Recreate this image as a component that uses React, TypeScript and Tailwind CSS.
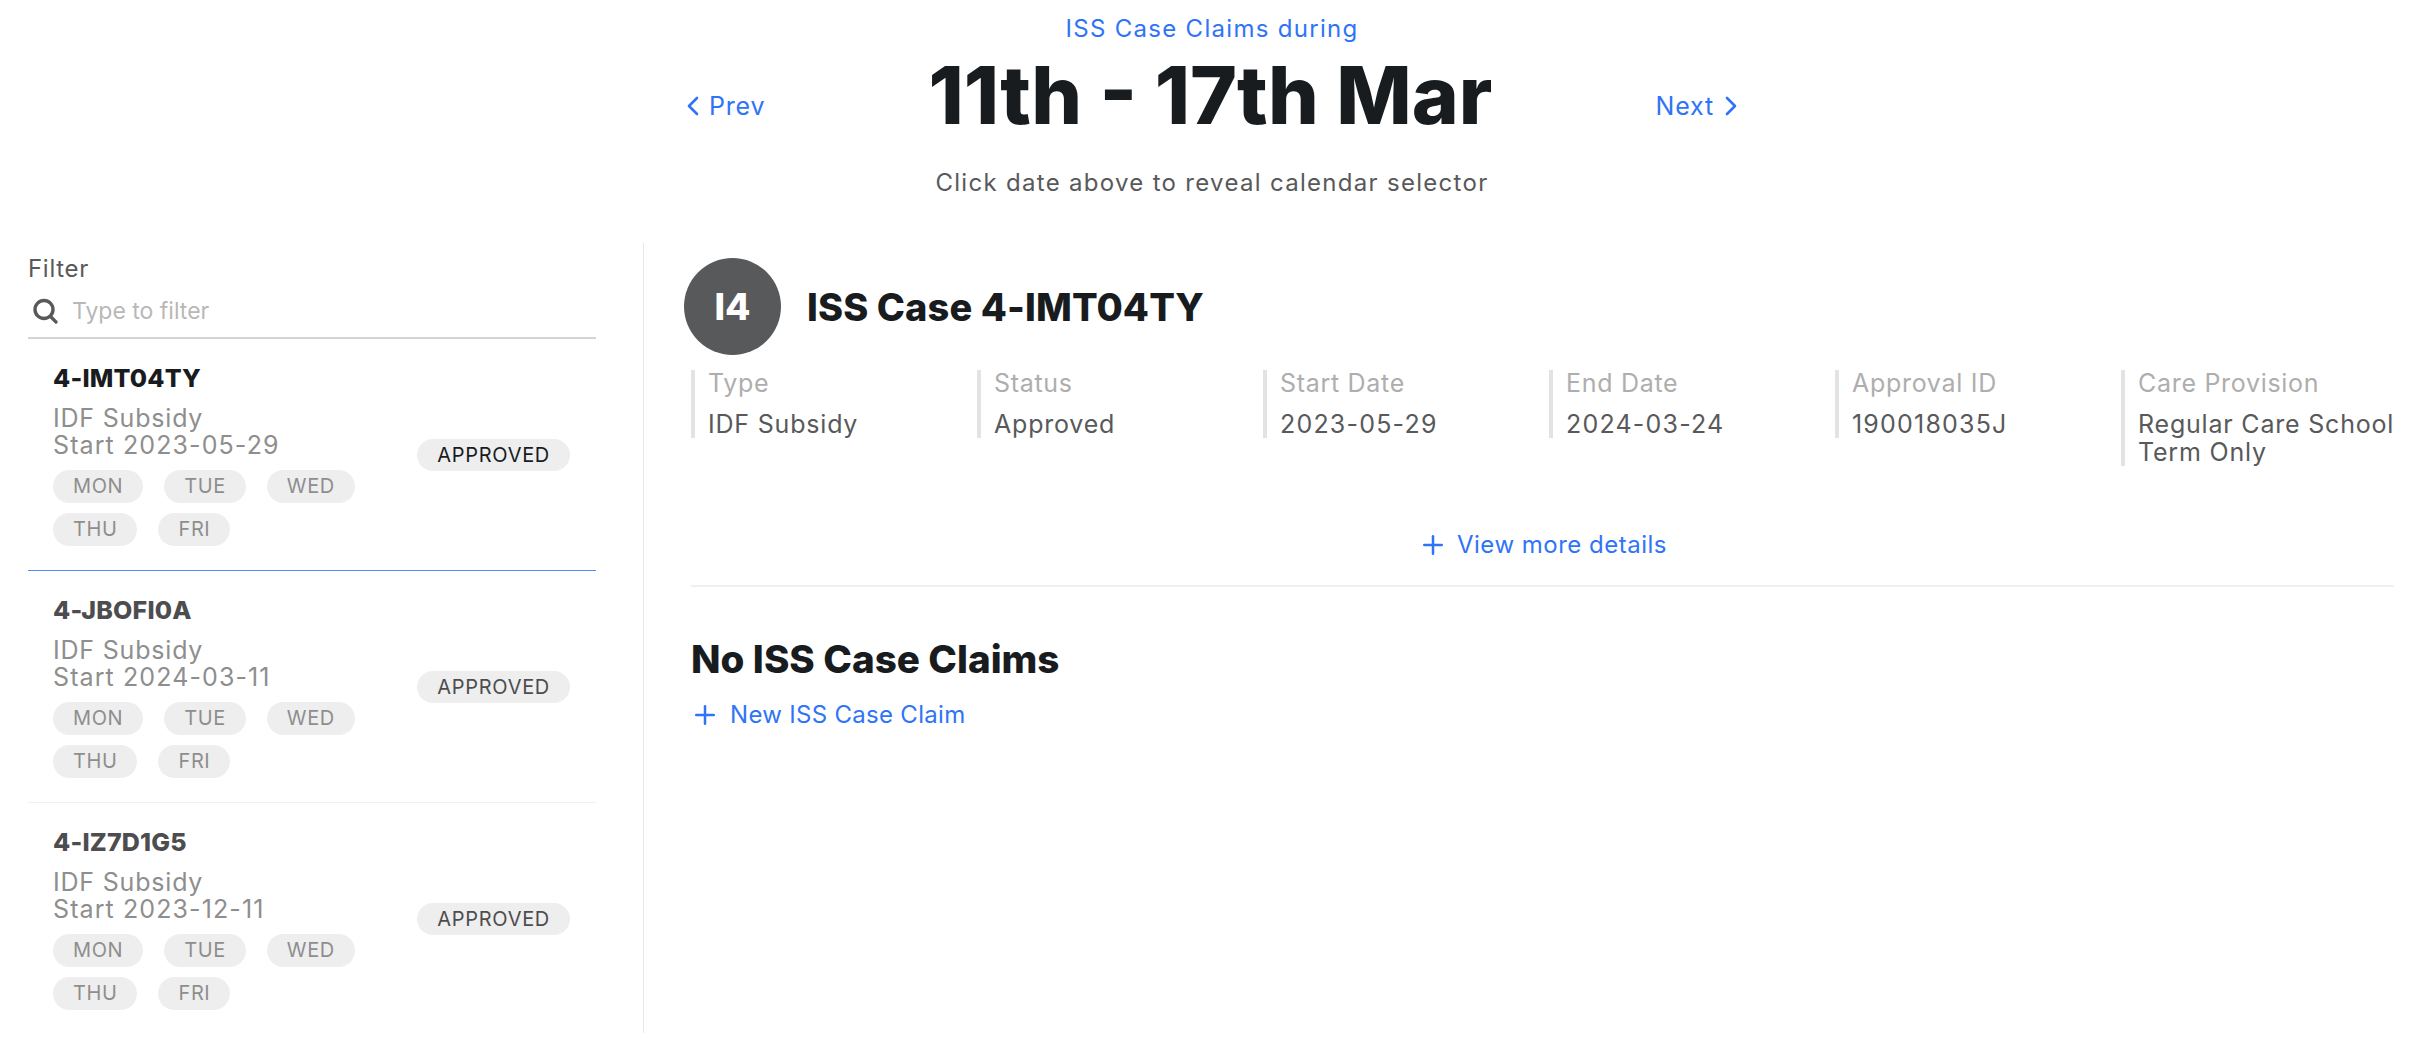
import { Plus } from "lucide-react";

const DAYS = ["MON", "TUE", "WED", "THU", "FRI"];

const CASES = [
  { id: "4-IMT04TY", start: "2023-05-29", active: true },
  { id: "4-JBOFI0A", start: "2024-03-11", active: false },
  { id: "4-IZ7D1G5", start: "2023-12-11", active: false },
];

const DETAILS = [
  { label: "Type", value: "IDF Subsidy", numeric: false },
  { label: "Status", value: "Approved", numeric: false },
  { label: "Start Date", value: "2023-05-29", numeric: true },
  { label: "End Date", value: "2024-03-24", numeric: true },
  { label: "Approval ID", value: "190018035J", numeric: true },
  { label: "Care Provision", value: "Regular Care School Term Only", numeric: false },
];

function CaseRow({ id, start, active, last }: { id: string; start: string; active: boolean; last: boolean }) {
  return (
    <div className={`flex items-center pl-[25px] pr-[26px] pt-[25px] pb-[25px] h-[232px] ${last ? "" : active ? "border-b border-[#4f8ff5]" : "border-b border-[#f0f0f0]"}`}>
      <div className="flex-1 min-w-0">
        <div className={`text-[25px] leading-[28px] font-extrabold tracking-[0.2px] ${active ? "text-[#191c1f]" : "text-[#4d4d4f]"}`}>{id}</div>
        <div className="mt-[13px] text-[25px] leading-[27px] tracking-[0.8px] text-[#8e8e8e]">
          <div>IDF Subsidy</div>
          <div className="tracking-[1.1px]">Start {start}</div>
        </div>
        <div className="mt-[11px] flex flex-wrap gap-x-[21px] gap-y-[10px]">
          {DAYS.map((d) => (
            <span key={d} className="h-[33px] px-[20px] rounded-full bg-[#eeeeee] text-[20px] leading-[33px] tracking-[0.6px] text-[#8e8e8e]">{d}</span>
          ))}
        </div>
      </div>
      <span className={`shrink-0 h-[32px] px-[20px] rounded-full bg-[#eeeeee] text-[20px] leading-[32px] tracking-[0.7px] ${active ? "text-[#191c1f]" : "text-[#4d4d4f]"}`}>APPROVED</span>
    </div>
  );
}

export default function App() {
  return (
    <div className="w-full h-[1038px] overflow-hidden bg-white font-[Inter,sans-serif]">
      {/* Week header */}
      <header className="h-[243px] pt-[14px] flex flex-col items-center">
        <a className="text-[24px] leading-[30px] tracking-[1.3px] text-[#2f74f6]">ISS Case Claims during</a>
        <div className="mt-[5px] w-[1052px] flex items-center justify-between">
          <a className="mt-[22px] flex items-center gap-[9px] text-[25px] leading-[30px] tracking-[0.8px] text-[#2f74f6]">
            <svg viewBox="0 0 14 20" className="w-[14px] h-[20px]" fill="none" stroke="currentColor" strokeWidth="2.6" strokeLinecap="round" strokeLinejoin="round">
              <path d="M11 2L3 10l8 8" />
            </svg>
            Prev
          </a>
          <h1 className="text-[80px] leading-[92px] font-extrabold text-[#191c1f]">11th - 17th Mar</h1>
          <a className="mt-[22px] flex items-center gap-[10px] text-[25px] leading-[30px] tracking-[0.8px] text-[#2f74f6]">
            Next
            <svg viewBox="0 0 14 20" className="w-[14px] h-[20px]" fill="none" stroke="currentColor" strokeWidth="2.6" strokeLinecap="round" strokeLinejoin="round">
              <path d="M3 2l8 8-8 8" />
            </svg>
          </a>
        </div>
        <p className="mt-[27px] text-[24px] leading-[30px] tracking-[1.3px] text-[#58595b]">Click date above to reveal calendar selector</p>
      </header>

      <div className="flex h-[790px]">
        {/* Case list */}
        <aside className="w-[644px] shrink-0 border-r border-[#e6e6e6] pl-[28px] pr-[47px] pt-[11px]">
          <div className="text-[24px] leading-[30px] tracking-[0.7px] text-[#58595b]">Filter</div>
          <label className="mt-[13px] h-[42px] pb-[12px] flex items-center gap-[14px] pl-[4px] border-b-2 border-[#d4d4d4]">
            <svg viewBox="0 0 26 26" className="w-[26px] h-[26px] shrink-0" fill="none" stroke="#58595b" strokeLinecap="round">
              <circle cx="12" cy="11.5" r="9" strokeWidth="3.4" />
              <path d="M18.5 18.5l5.5 5.5" strokeWidth="3.2" />
            </svg>
            <input className="flex-1 min-w-0 outline-none text-[23px] leading-[30px] placeholder:text-[#b8b8b8]" placeholder="Type to filter" />
          </label>
          {CASES.map((c, i) => (
            <CaseRow key={c.id} id={c.id} start={c.start} active={c.active} last={i === CASES.length - 1} />
          ))}
        </aside>

        {/* Case details */}
        <main className="flex-1 min-w-0 pl-[40px] pr-[30px] pt-[15px]">
          <div className="flex items-center gap-[26px]">
            <div className="w-[97px] h-[97px] rounded-full bg-[#58595b] flex items-center justify-center text-[37px] font-extrabold text-white">I4</div>
            <h2 className="text-[38px] leading-[44px] tracking-[0.1px] font-extrabold text-[#191c1f]">ISS Case 4-IMT04TY</h2>
          </div>

          <div className="ml-[7px] mt-[15px] flex items-start w-[1716px]">
            {DETAILS.map((d) => (
              <div key={d.label} className="w-[286px] shrink-0 pr-[4px] border-l-[4px] border-[#e3e3e3] pl-[13px]">
                <div className="text-[25px] leading-[27px] tracking-[0.7px] text-[#aeaeae]">{d.label}</div>
                <div className={`mt-[13px] text-[25px] leading-[28px] text-[#58595b] ${d.numeric ? "tracking-[1.2px]" : "tracking-[0.8px]"}`}>{d.value}</div>
              </div>
            ))}
          </div>

          <div className="ml-[7px] h-[121px] pt-[64px] border-b-2 border-[#f0f0f0] flex justify-center">
            <a className="h-[30px] flex items-center gap-[9px] text-[24px] leading-[30px] tracking-[0.5px] text-[#2f74f6]">
              <Plus className="w-[30px] h-[30px]" strokeWidth={2} />
              View more details
            </a>
          </div>

          <h3 className="ml-[7px] mt-[49px] text-[38.6px] leading-[46px] font-extrabold text-[#191c1f]">No ISS Case Claims</h3>
          <a className="ml-[6px] mt-[18px] h-[30px] flex items-center gap-[10px] text-[24px] leading-[30px] tracking-[0.3px] text-[#2f74f6]">
            <Plus className="w-[30px] h-[30px]" strokeWidth={2} />
            New ISS Case Claim
          </a>
        </main>
      </div>
    </div>
  );
}
